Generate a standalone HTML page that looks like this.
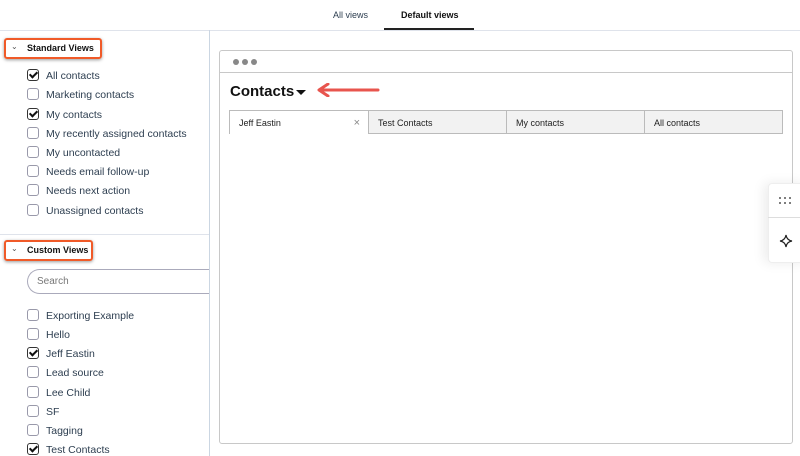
<!DOCTYPE html>
<html><head><style>
*{box-sizing:border-box;margin:0;padding:0}
body{width:800px;height:456px;overflow:hidden;background:#fff;font-family:"Liberation Sans",sans-serif;color:#33475b;position:relative}
.a{position:absolute}
.t{font-size:10px;color:#2d3e50}
.cb{position:absolute;left:27px;width:12px;height:12px;border:1px solid #99a;border-radius:3px;background:#fff}
.cb.on{border-color:#333}
.cb.on:after{content:"";position:absolute;left:3px;top:0px;width:3px;height:6px;border:solid #111;border-width:0 2px 2px 0;transform:rotate(45deg)}
.lbl{position:absolute;left:46px;font-size:10.5px;color:#2d3e50;line-height:12px}
.hl{position:absolute;border:2px solid #f05a28;border-radius:3px;box-shadow:0 1px 3px rgba(0,0,0,.4);font-size:9px;font-weight:bold;color:#111;padding-left:21px;line-height:17px}
.tab{position:absolute;top:110px;height:24px;border:1px solid #bbb;background:#f2f2f2;font-size:9px;color:#222;padding-left:9px;line-height:24px}
.d{position:absolute;width:2px;height:2px;background:#555;border-radius:50%}
</style></head><body>
<div class="a t" style="left:333px;top:10px;font-size:9px">All views</div>
<div class="a t" style="left:401px;top:10px;font-size:9px;font-weight:bold;color:#111">Default views</div>
<div class="a" style="left:384px;top:28px;width:90px;height:3px;background:#222"></div>
<div class="a" style="left:0;top:30px;width:800px;height:1px;background:#dfe3eb"></div>

<div class="hl" style="left:4px;top:38px;width:98px;height:21px">Standard Views</div>
<div class="a" style="left:11px;top:42px;font-size:8px;color:#555">&#8964;</div>
<div class="cb on" style="top:69px"></div><div class="lbl" style="top:70px">All contacts</div>
<div class="cb" style="top:88px"></div><div class="lbl" style="top:89px">Marketing contacts</div>
<div class="cb on" style="top:108px"></div><div class="lbl" style="top:109px">My contacts</div>
<div class="cb" style="top:127px"></div><div class="lbl" style="top:128px">My recently assigned contacts</div>
<div class="cb" style="top:146px"></div><div class="lbl" style="top:147px">My uncontacted</div>
<div class="cb" style="top:165px"></div><div class="lbl" style="top:166px">Needs email follow-up</div>
<div class="cb" style="top:184px"></div><div class="lbl" style="top:185px">Needs next action</div>
<div class="cb" style="top:204px"></div><div class="lbl" style="top:205px">Unassigned contacts</div>
<div class="a" style="left:0;top:234px;width:209px;height:1px;background:#dfe3eb"></div>

<div class="hl" style="left:4px;top:240px;width:89px;height:21px">Custom Views</div>
<div class="a" style="left:11px;top:244px;font-size:8px;color:#555">&#8964;</div>
<div class="a" style="left:27px;top:269px;width:183px;height:25px;border:1px solid #aab;border-right:none;border-radius:13px 0 0 13px;font-size:10px;color:#777;padding-left:9px;line-height:23px">Search</div>
<div class="a" style="left:209px;top:30px;width:1px;height:426px;background:#cbd6e2"></div>
<div class="cb" style="top:309px"></div><div class="lbl" style="top:310px">Exporting Example</div>
<div class="cb" style="top:328px"></div><div class="lbl" style="top:329px">Hello</div>
<div class="cb on" style="top:347px"></div><div class="lbl" style="top:348px">Jeff Eastin</div>
<div class="cb" style="top:366px"></div><div class="lbl" style="top:367px">Lead source</div>
<div class="cb" style="top:386px"></div><div class="lbl" style="top:387px">Lee Child</div>
<div class="cb" style="top:405px"></div><div class="lbl" style="top:406px">SF</div>
<div class="cb" style="top:424px"></div><div class="lbl" style="top:425px">Tagging</div>
<div class="cb on" style="top:443px"></div><div class="lbl" style="top:444px">Test Contacts</div>

<div class="a" style="left:219px;top:50px;width:574px;height:394px;border:1px solid #c8c8c8;border-radius:3px"></div>
<div class="a" style="left:219px;top:72px;width:574px;height:1px;background:#c8c8c8"></div>
<div class="a" style="left:233px;top:59px;width:6px;height:6px;border-radius:50%;background:#888"></div>
<div class="a" style="left:242px;top:59px;width:6px;height:6px;border-radius:50%;background:#888"></div>
<div class="a" style="left:251px;top:59px;width:6px;height:6px;border-radius:50%;background:#888"></div>
<div class="a" style="left:230px;top:83px;font-size:15px;font-weight:bold;color:#111">Contacts</div>
<div class="a" style="left:296px;top:90px;border-left:5px solid transparent;border-right:5px solid transparent;border-top:5px solid #111"></div>
<svg class="a" style="left:316px;top:83px" width="66" height="14"><path d="M4 7H62" stroke="#e8554e" stroke-width="3" stroke-linecap="round"/><path d="M12 1L3 7L12 13" fill="none" stroke="#e8554e" stroke-width="3" stroke-linecap="round" stroke-linejoin="round"/></svg>
<div class="tab" style="left:229px;width:140px;background:#fff;border-bottom:none">Jeff Eastin<span style="position:absolute;right:8px;color:#888;font-size:11px">×</span></div>
<div class="tab" style="left:368px;width:139px">Test Contacts</div>
<div class="tab" style="left:506px;width:139px">My contacts</div>
<div class="tab" style="left:644px;width:139px">All contacts</div>

<div class="a" style="left:768px;top:183px;width:40px;height:80px;background:#fff;border-radius:4px;box-shadow:-4px 0 12px rgba(0,0,0,.08);border:1px solid #eee"></div>
<div class="a" style="left:768px;top:217px;width:32px;height:1px;background:#ddd"></div>
<div class="d" style="left:779px;top:197px"></div><div class="d" style="left:784px;top:197px"></div><div class="d" style="left:789px;top:197px"></div>
<div class="d" style="left:779px;top:202px"></div><div class="d" style="left:784px;top:202px"></div><div class="d" style="left:789px;top:202px"></div>
<svg class="a" style="left:779px;top:234px" width="14" height="14"><path d="M7 1Q7.8 6.2 13 7Q7.8 7.8 7 13Q6.2 7.8 1 7Q6.2 6.2 7 1Z" fill="none" stroke="#222" stroke-width="1.2"/></svg>
</body></html>
